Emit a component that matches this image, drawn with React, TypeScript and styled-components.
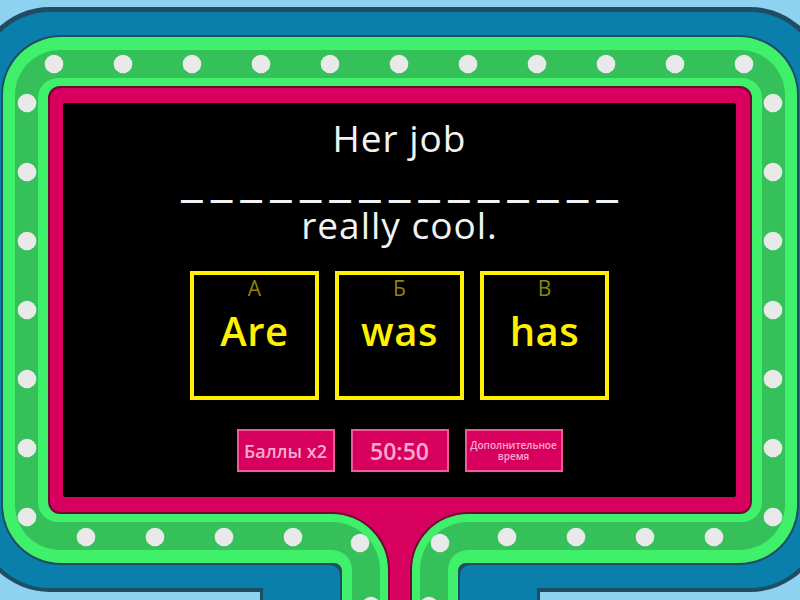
import React from "react";
import styled, { createGlobalStyle } from "styled-components";

const GlobalStyle = createGlobalStyle`
  html, body {
    margin: 0;
    padding: 0;
    background: #8ed2f2;
  }
  * { box-sizing: border-box; }
`;

const palette = {
  sky: "#8ed2f2",
  outline: "#1f4d63",
  blue: "#0a7fab",
  lime: "#3ff06b",
  green: "#35c05a",
  magenta: "#d8005e",
  magentaEdge: "#6e0834",
  bulb: "#e9e9e9",
  yellow: "#fff000",
  olive: "#8c8700",
};

const Stage = styled.main`
  position: relative;
  width: 800px;
  height: 600px;
  overflow: hidden;
  padding: 103px 64px 103px 63px;
  background: ${palette.sky};
  font-family: "Open Sans", "Noto Sans", sans-serif;
`;

const Backdrop = styled.svg`
  position: absolute;
  top: 0;
  left: 0;
  pointer-events: none;
`;

const Screen = styled.section`
  position: relative;
  width: 673px;
  height: 394px;
  background: #000;
  border-radius: 2px;
  display: flex;
  flex-direction: column;
  align-items: center;
`;

const Question = styled.h1`
  margin: 14px 0 0;
  max-width: 520px;
  color: #f3f3f3;
  font-size: 37px;
  font-weight: 500;
  line-height: 42px;
  letter-spacing: 1px;
  text-align: center;
`;

const Blank = styled.span`
  font-family: "DejaVu Sans Mono", "Liberation Mono", monospace;
  font-size: 33.5px;
  letter-spacing: 9.5px;
  margin-right: -9.5px;
  -webkit-text-stroke: 1.6px #f3f3f3;
`;

const AnswerRow = styled.div`
  display: flex;
  gap: 16px;
  margin-top: 25px;
`;

const AnswerCard = styled.button`
  width: 129px;
  height: 129px;
  padding: 1px 0 0;
  border: 4px solid ${palette.yellow};
  background: #000;
  display: flex;
  flex-direction: column;
  align-items: center;
  font-family: inherit;
  cursor: pointer;
`;

const AnswerLetter = styled.span`
  color: ${palette.olive};
  font-size: 21px;
  line-height: 24px;
  font-weight: 500;
`;

const AnswerWord = styled.span`
  margin-top: 9px;
  color: ${palette.yellow};
  font-size: 40px;
  line-height: 44px;
  font-weight: 600;
  letter-spacing: 0.5px;
`;

const PowerUpRow = styled.div`
  display: flex;
  gap: 16px;
  margin-top: 29px;
`;

const PowerUp = styled.button<{ $size: number; $line: number; $wrap?: boolean }>`
  width: 98px;
  height: 43px;
  padding: 0 2px;
  border: 2px solid #ee5b98;
  background: ${palette.magenta};
  color: #f9abcd;
  font-family: inherit;
  font-size: ${(p) => p.$size}px;
  line-height: ${(p) => p.$line}px;
  font-weight: 600;
  white-space: ${(p) => (p.$wrap ? "normal" : "nowrap")};
  display: flex;
  align-items: center;
  justify-content: center;
  text-align: center;
  cursor: pointer;
`;

// Rounded screen outline joined to a centre stem that runs off the bottom edge,
// with concave fillets where the stem meets the screen.
const podium = (
  x1: number,
  y1: number,
  x2: number,
  y2: number,
  r: number,
  sx1: number,
  sx2: number,
  f: number,
  b = 606
) =>
  `M${x1 + r},${y1} H${x2 - r} A${r},${r} 0 0 1 ${x2},${y1 + r} V${y2 - r} ` +
  `A${r},${r} 0 0 1 ${x2 - r},${y2} H${sx2 + f} A${f},${f} 0 0 0 ${sx2},${y2 + f} ` +
  `V${b} H${sx1} V${y2 + f} A${f},${f} 0 0 0 ${sx1 - f},${y2} H${x1 + r} ` +
  `A${r},${r} 0 0 1 ${x1},${y2 - r} V${y1 + r} A${r},${r} 0 0 1 ${x1 + r},${y1} Z`;

const bulbs: Array<[number, number]> = [
  ...Array.from({ length: 11 }, (_, i) => [54 + 69 * i, 64] as [number, number]),
  ...Array.from({ length: 7 }, (_, i) => [27, 103 + 69 * i] as [number, number]),
  ...Array.from({ length: 7 }, (_, i) => [773, 103 + 69 * i] as [number, number]),
  [86, 537],
  [155, 537],
  [224, 537],
  [293, 537],
  [360, 543],
  [440, 543],
  [507, 537],
  [576, 537],
  [645, 537],
  [714, 537],
  [371, 606],
  [429, 606],
];

function Marquee() {
  return (
    <Backdrop width="800" height="600" viewBox="0 0 800 600" aria-hidden="true">
      <rect x="-25" y="7" width="850" height="585" rx="75" fill={palette.outline} />
      <rect x="260" y="560" width="280" height="50" fill={palette.outline} />
      <rect x="-20" y="12" width="840" height="576" rx="70" fill={palette.blue} />
      <rect x="263" y="560" width="274" height="50" fill={palette.blue} />
      <path d={podium(1, 35, 799, 565, 60, 340, 460, 10)} fill={palette.outline} />
      <path d={podium(3, 37, 797, 563, 58, 342, 458, 8)} fill={palette.lime} />
      <path d={podium(15, 50, 785, 550, 45, 352, 448, 20)} fill={palette.green} />
      <path d={podium(38, 78, 762, 522, 20, 380, 420, 48)} fill={palette.lime} />
      <path d={podium(48, 86, 752, 514, 12, 388, 412, 56)} fill={palette.magentaEdge} />
      <path d={podium(50, 88, 750, 512, 10, 390, 410, 58)} fill={palette.magenta} />
      {bulbs.map(([cx, cy], i) => (
        <circle key={i} cx={cx} cy={cy} r="9.3" fill={palette.bulb} />
      ))}
    </Backdrop>
  );
}

const answers = [
  { letter: "А", word: "Are" },
  { letter: "Б", word: "was" },
  { letter: "В", word: "has" },
];

export default function App() {
  return (
    <>
      <GlobalStyle />
      <Stage>
        <Marquee />
        <Screen>
          <Question>
            Her job <Blank>_______________</Blank> really cool.
          </Question>
          <AnswerRow>
            {answers.map((a) => (
              <AnswerCard key={a.letter}>
                <AnswerLetter>{a.letter}</AnswerLetter>
                <AnswerWord>{a.word}</AnswerWord>
              </AnswerCard>
            ))}
          </AnswerRow>
          <PowerUpRow>
            <PowerUp $size={18} $line={22}>Баллы x2</PowerUp>
            <PowerUp $size={23} $line={26}>50:50</PowerUp>
            <PowerUp $size={10} $line={11} $wrap>Дополнительное время</PowerUp>
          </PowerUpRow>
        </Screen>
      </Stage>
    </>
  );
}
